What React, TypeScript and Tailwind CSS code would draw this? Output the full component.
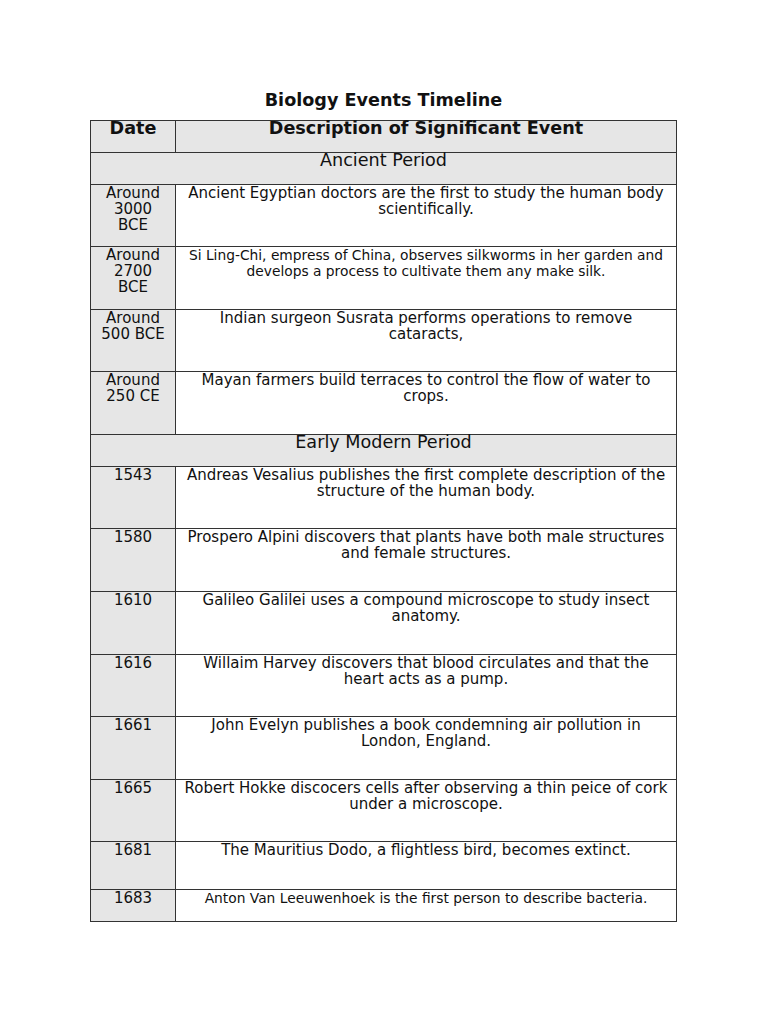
const rows: { date: string[]; text: string; h: number; small?: boolean }[] = [
  { date: ['Around', '3000', 'BCE'], text: 'Ancient Egyptian doctors are the first to study the human body scientifically.', h: 62 },
  { date: ['Around', '2700', 'BCE'], text: 'Si Ling-Chi, empress of China, observes silkworms in her garden and develops a process to cultivate them any make silk.', h: 63, small: true },
  { date: ['Around', '500 BCE'], text: 'Indian surgeon Susrata performs operations to remove cataracts,', h: 62 },
  { date: ['Around', '250 CE'], text: 'Mayan farmers build terraces to control the flow of water to crops.', h: 63 },
];

const modern: { date: string; text: string; h: number; small?: boolean }[] = [
  { date: '1543', text: 'Andreas Vesalius publishes the first complete description of the structure of the human body.', h: 62 },
  { date: '1580', text: 'Prospero Alpini discovers that plants have both male structures and female structures.', h: 63 },
  { date: '1610', text: 'Galileo Galilei uses a compound microscope to study insect anatomy.', h: 63 },
  { date: '1616', text: 'Willaim Harvey discovers that blood circulates and that the heart acts as a pump.', h: 62 },
  { date: '1661', text: 'John Evelyn publishes a book condemning air pollution in London, England.', h: 63 },
  { date: '1665', text: 'Robert Hokke discocers cells after observing a thin peice of cork under a microscope.', h: 62 },
  { date: '1681', text: 'The Mauritius Dodo, a flightless bird, becomes extinct.', h: 48 },
  { date: '1683', text: 'Anton Van Leeuwenhoek is the first person to describe bacteria.', h: 32, small: true },
];

const cell = 'border border-[#333] align-top text-center p-0';
const body = 'text-[15px] leading-[16px]';
const small = 'text-[13.8px] leading-[16px]';

export default function App() {
  return (
    <div className="min-h-[1024px] bg-white text-[#111]" style={{ fontFamily: '"DejaVu Sans", sans-serif' }}>
      <div className="pt-[90px] pl-[90px] w-[677px]">
        <h1 className="text-center font-bold text-[17.6px] leading-[20px] h-[30px]">Biology Events Timeline</h1>
        <table className="w-[587px] border-collapse table-fixed">
          <colgroup>
            <col className="w-[85px]" />
            <col />
          </colgroup>
          <tbody>
            <tr className="h-[32px] bg-[#e6e6e6]">
              <td className={`${cell} font-bold text-[17.6px] leading-[14px]`}>Date</td>
              <td className={`${cell} font-bold text-[17.6px] leading-[14px]`}>Description of Significant Event</td>
            </tr>
            <tr className="h-[32px] bg-[#e6e6e6]">
              <td colSpan={2} className={`${cell} text-[17.6px] leading-[14px]`}>Ancient Period</td>
            </tr>
            {rows.map((r, i) => (
              <tr key={i} style={{ height: r.h }}>
                <td className={`${cell} bg-[#e6e6e6] ${body}`}>
                  {r.date.map((d, j) => (
                    <div key={j}>{d}</div>
                  ))}
                </td>
                <td className={`${cell} px-[7px] ${r.small ? small : body}`}>{r.text}</td>
              </tr>
            ))}
            <tr className="h-[32px] bg-[#e6e6e6]">
              <td colSpan={2} className={`${cell} text-[17.6px] leading-[14px]`}>Early Modern Period</td>
            </tr>
            {modern.map((r, i) => (
              <tr key={i} style={{ height: r.h }}>
                <td className={`${cell} bg-[#e6e6e6] ${body}`}>{r.date}</td>
                <td className={`${cell} px-[7px] ${r.small ? small : body}`}>{r.text}</td>
              </tr>
            ))}
          </tbody>
        </table>
      </div>
    </div>
  );
}
